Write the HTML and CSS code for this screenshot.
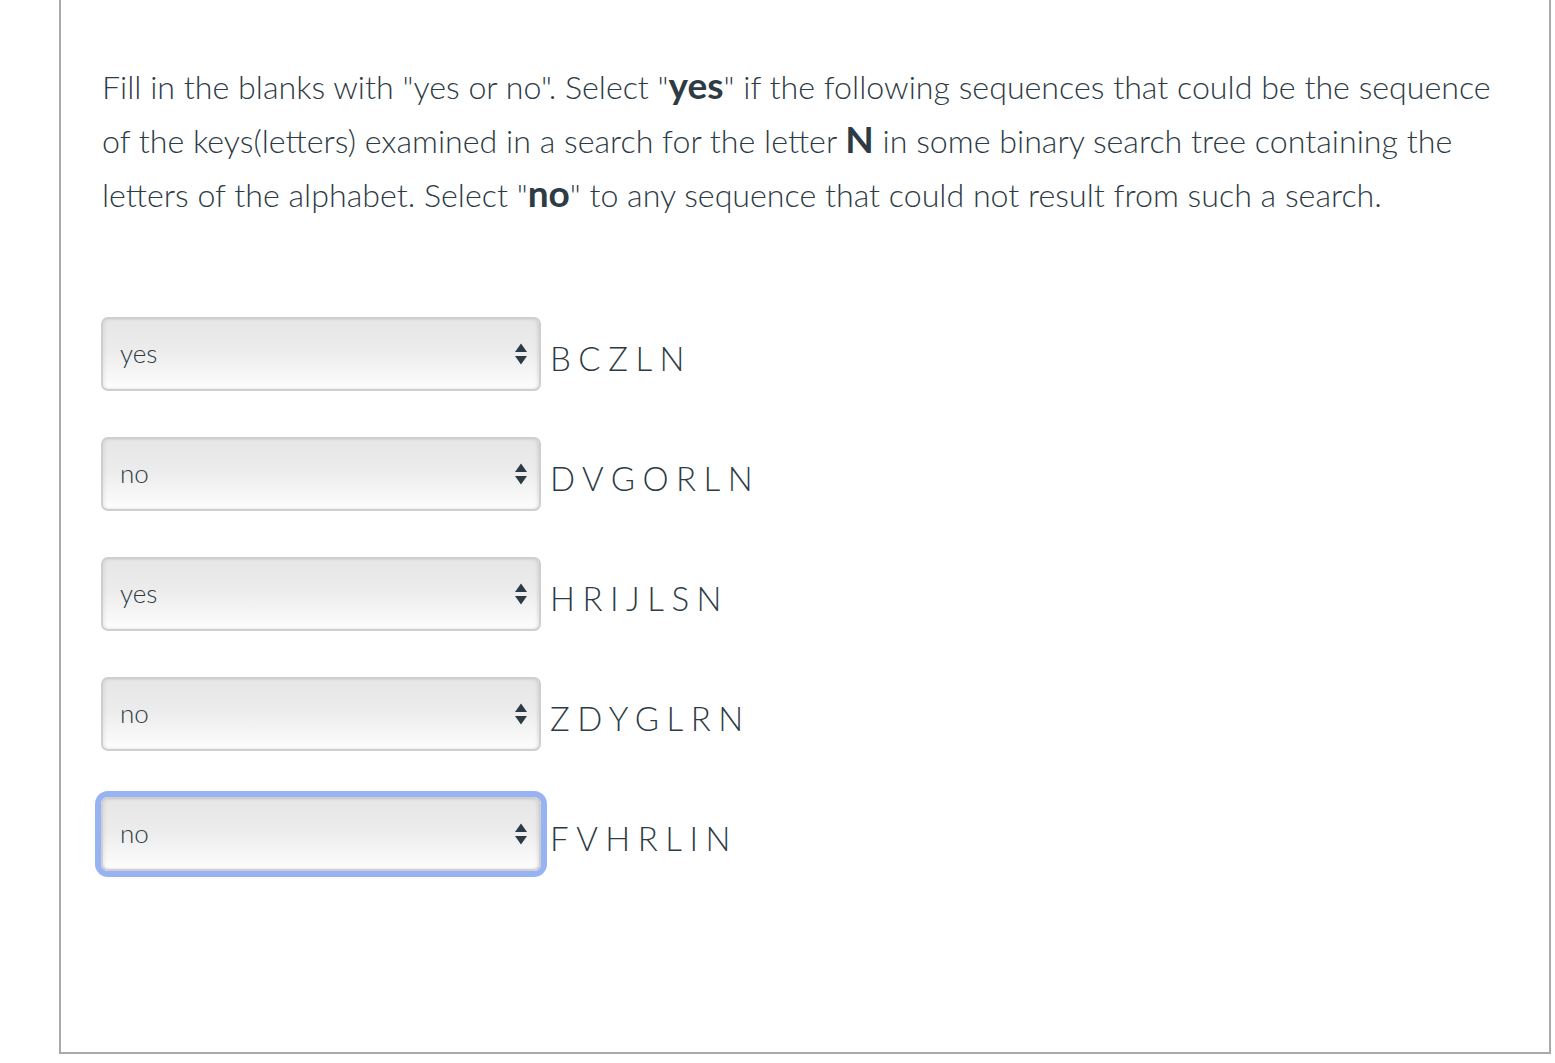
FILE: index.html
```html
<!DOCTYPE html>
<html lang="en">
<head>
<meta charset="utf-8">
<title>Binary search tree question</title>
<link rel="stylesheet" href="styles.css">
</head>
<body>
<div class="question">
  <p class="prompt">Fill in the blanks with "yes or no". Select "<strong class="kw">yes</strong>" if the following sequences that could be the sequence of the keys(letters) examined in a search for the letter <strong class="kw">N</strong> in some binary search tree containing the letters of the alphabet. Select "<strong class="kw">no</strong>" to any sequence that could not result from such a search.</p>
  <div class="rows">
    <div class="row">
      <div class="sel">
        <select><option selected>yes</option><option>no</option></select>
        <svg class="arrow" viewBox="0 0 12 24" width="12" height="24"><path d="M6 1.5 L12 10 H0 Z M0 14 H12 L6 22.5 Z" fill="#2d3b45"/></svg>
      </div>
      <span class="seq">BCZLN</span>
    </div>
    <div class="row">
      <div class="sel">
        <select><option>yes</option><option selected>no</option></select>
        <svg class="arrow" viewBox="0 0 12 24" width="12" height="24"><path d="M6 1.5 L12 10 H0 Z M0 14 H12 L6 22.5 Z" fill="#2d3b45"/></svg>
      </div>
      <span class="seq">DVGORLN</span>
    </div>
    <div class="row">
      <div class="sel">
        <select><option selected>yes</option><option>no</option></select>
        <svg class="arrow" viewBox="0 0 12 24" width="12" height="24"><path d="M6 1.5 L12 10 H0 Z M0 14 H12 L6 22.5 Z" fill="#2d3b45"/></svg>
      </div>
      <span class="seq">HRIJLSN</span>
    </div>
    <div class="row">
      <div class="sel">
        <select><option>yes</option><option selected>no</option></select>
        <svg class="arrow" viewBox="0 0 12 24" width="12" height="24"><path d="M6 1.5 L12 10 H0 Z M0 14 H12 L6 22.5 Z" fill="#2d3b45"/></svg>
      </div>
      <span class="seq">ZDYGLRN</span>
    </div>
    <div class="row">
      <div class="sel focused">
        <select><option>yes</option><option selected>no</option></select>
        <svg class="arrow" viewBox="0 0 12 24" width="12" height="24"><path d="M6 1.5 L12 10 H0 Z M0 14 H12 L6 22.5 Z" fill="#2d3b45"/></svg>
      </div>
      <span class="seq">FVHRLIN</span>
    </div>
  </div>
</div>
</body>
</html>
```

FILE: styles.css
```css
html, body {
  margin: 0;
  padding: 0;
  background: #ffffff;
}

body {
  font-family: "Lato Light", Lato, "Open Sans", "Liberation Sans", sans-serif;
  color: #2d3b45;
}

.question {
  box-sizing: border-box;
  margin-left: 59px;
  width: 1492px;
  height: 1054px;
  border: 2px solid #a9a9a9;
  border-top: none;
  padding: 60px 50px 0 40px;
}

.prompt {
  margin: 0 0 0 1px;
  font-size: 32.2px;
  font-weight: 300;
  line-height: 54px;
}

.kw {
  font-family: Lato, "Open Sans", "Liberation Sans", sans-serif;
  font-weight: 700;
  font-size: 37px;
  line-height: 1;
}

.rows {
  margin-top: 95px;
  display: flex;
  flex-direction: column;
  gap: 46px;
}

.row {
  display: flex;
  align-items: center;
  gap: 9px;
  height: 74px;
}

.sel {
  position: relative;
  width: 440px;
  height: 74px;
  border-radius: 7px;
}

.sel.focused {
  box-shadow: 0 0 0 6px #98b3f3;
  border-radius: 7px;
}

.sel select {
  -webkit-appearance: none;
  appearance: none;
  box-sizing: border-box;
  width: 100%;
  height: 100%;
  margin: 0;
  border: 2px solid #cfcfcf;
  border-radius: 7px;
  background: linear-gradient(#e6e6e6 0%, #ececec 45%, #fdfdfd 100%);
  box-shadow: inset 2px 0 3px rgba(0,0,0,0.06), inset -2px 0 3px rgba(0,0,0,0.08);
  padding: 0 40px 2px 17px;
  font-family: "Lato Light", Lato, "Open Sans", "Liberation Sans", sans-serif;
  font-size: 26px;
  font-weight: 300;
  color: #2d3b45;
  outline: none;
}

.arrow {
  position: absolute;
  right: 14px;
  top: 25px;
  pointer-events: none;
}

.seq {
  font-size: 33px;
  font-weight: 300;
  letter-spacing: 7.5px;
  padding-top: 8px;
}
```
